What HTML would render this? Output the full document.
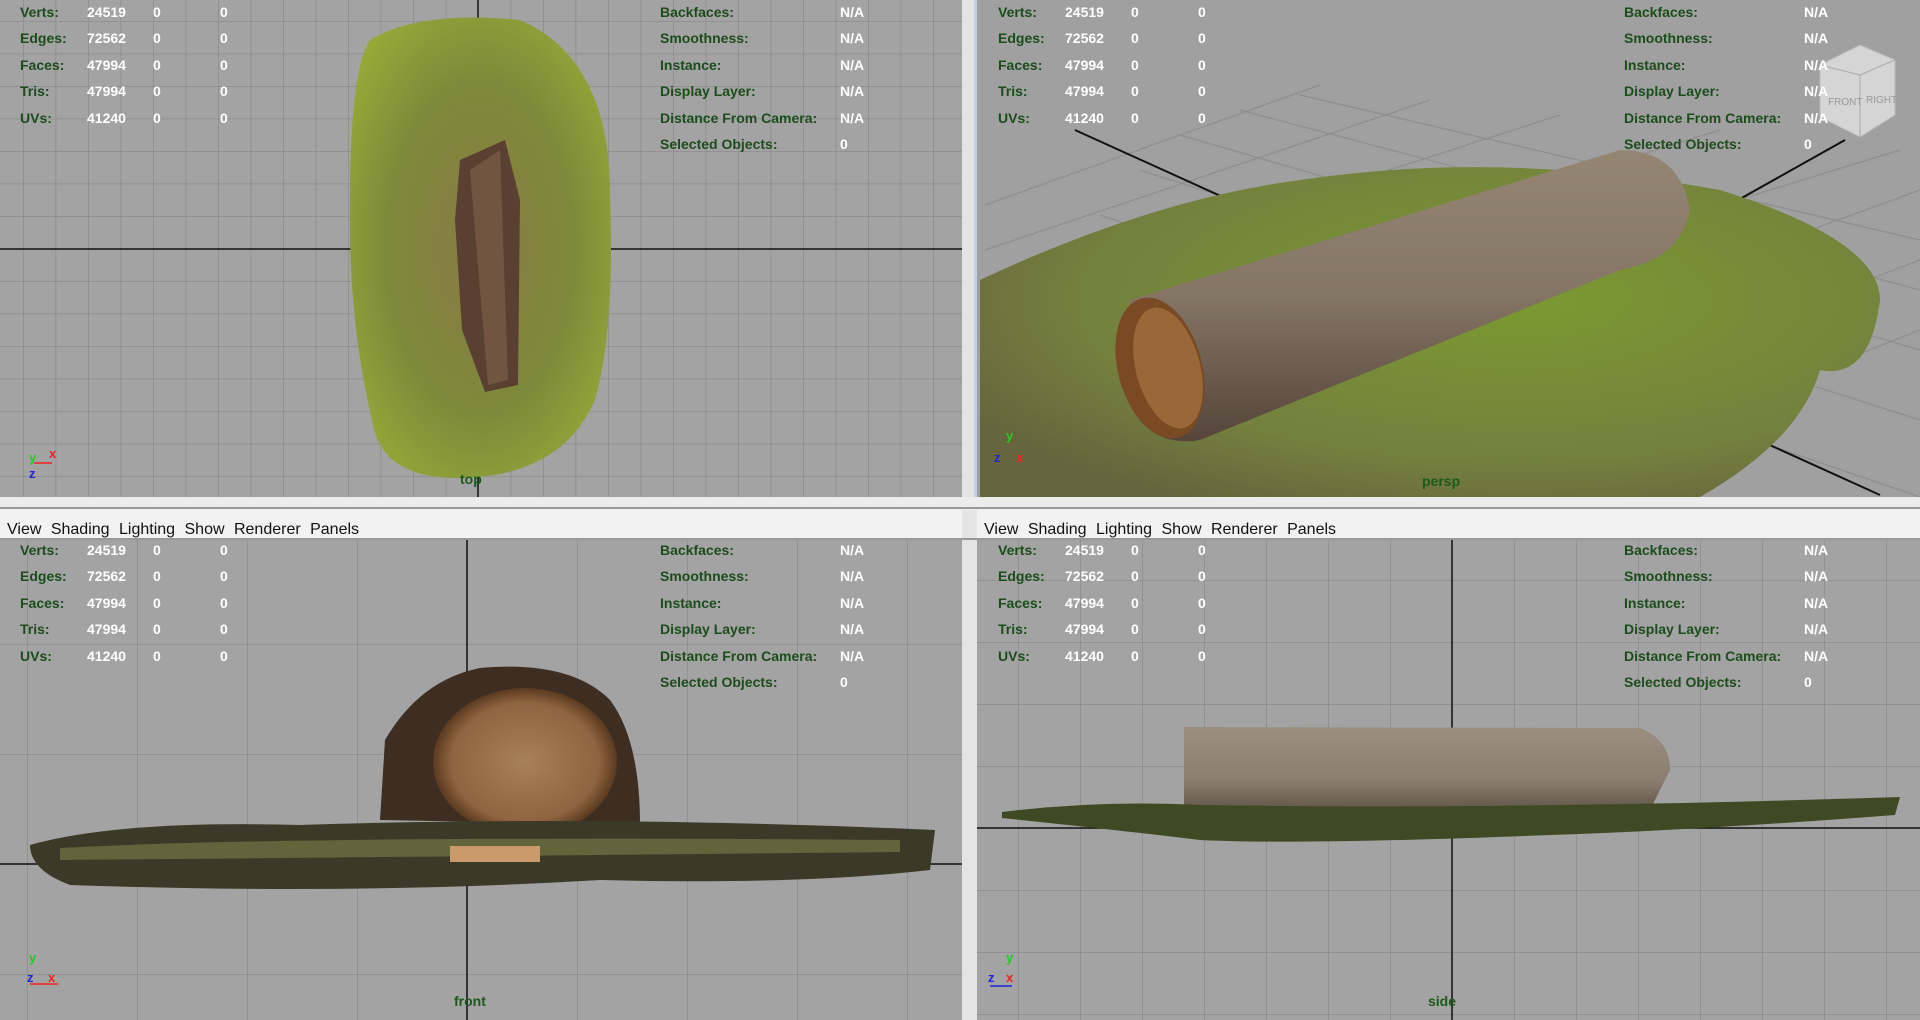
<!DOCTYPE html>
<html><head><meta charset="utf-8">
<style>
html,body{margin:0;padding:0;background:#e6e6e6;width:1920px;height:1020px;overflow:hidden}
svg{display:block}
.h{font-family:"Liberation Sans",sans-serif;font-weight:bold;font-size:14px}
.g{fill:#1b4d1b}.w{fill:#fff}
.m{font-family:"Liberation Sans",sans-serif;font-size:16px;fill:#111;word-spacing:5px}
</style></head><body>
<svg width="1920" height="1020" xmlns="http://www.w3.org/2000/svg">
<defs>
<pattern id="gTL" x="23" y="21" width="32.5" height="32.5" patternUnits="userSpaceOnUse"><path d="M0 0V32.5M0 0H32.5" stroke="#8c8c8c" stroke-width="1.5" fill="none"/></pattern>
<pattern id="gBL" x="27" y="534" width="110" height="110" patternUnits="userSpaceOnUse"><path d="M0 0V110M0 0H110" stroke="#8c8c8c" stroke-width="1.5" fill="none"/></pattern>
<pattern id="gBR" x="1018" y="580" width="62" height="62" patternUnits="userSpaceOnUse"><path d="M0 0V62M0 0H62" stroke="#8c8c8c" stroke-width="1.5" fill="none"/></pattern>
<radialGradient id="grass" cx="50%" cy="50%" r="60%"><stop offset="0" stop-color="#8a7a45"/><stop offset=".6" stop-color="#7d8a3a"/><stop offset="1" stop-color="#95a838"/></radialGradient>
<linearGradient id="bark" x1="0" y1="0" x2="0" y2="1"><stop offset="0" stop-color="#958674"/><stop offset=".5" stop-color="#847565"/><stop offset="1" stop-color="#55453a"/></linearGradient>
<linearGradient id="barkS" x1="0" y1="0" x2="0" y2="1"><stop offset="0" stop-color="#9a8f80"/><stop offset=".6" stop-color="#8a7e70"/><stop offset="1" stop-color="#5a5040"/></linearGradient>
<radialGradient id="cut"><stop offset="0" stop-color="#a8805a"/><stop offset=".8" stop-color="#8f6440"/><stop offset="1" stop-color="#5a3a20"/></radialGradient>
<radialGradient id="ground2" cx="60%" cy="40%" r="70%"><stop offset="0" stop-color="#7a9a30"/><stop offset=".7" stop-color="#74803e"/><stop offset="1" stop-color="#67653d"/></radialGradient>
</defs>

<!-- TL viewport -->
<rect x="0" y="0" width="962" height="497" fill="#a3a3a3"/>
<rect x="0" y="0" width="962" height="497" fill="url(#gTL)"/>
<line x1="478" y1="0" x2="478" y2="497" stroke="#111" stroke-width="1.5"/>
<line x1="0" y1="249" x2="962" y2="249" stroke="#111" stroke-width="1.5"/>
<path d="M370 40 Q420 10 520 20 Q612 60 610 200 Q615 330 595 400 Q560 480 450 478 Q380 475 372 420 Q348 320 350 200 Q350 70 370 40Z" fill="url(#grass)"/>
<path d="M460 160 L505 140 L520 200 L518 385 L485 392 L462 330 L455 220Z" fill="#5a4030"/>
<path d="M470 170 L500 150 L508 380 L488 385Z" fill="#7a5e48" opacity=".7"/>

<!-- TR viewport -->
<rect x="977" y="0" width="943" height="497" fill="#a0a0a0"/>
<g stroke="#8e8e8e" stroke-width="1.2" fill="none">
<path d="M985 205 L1320 85 M985 250 L1430 100 M985 300 L1560 115 M985 360 L1720 130 M990 430 L1900 150 M1100 490 L1920 190 M1300 497 L1920 260 M1500 497 L1920 330"/>
<path d="M1100 215 L1920 497 M1140 170 L1920 420 M1180 135 L1920 350 M1240 110 L1920 290 M1300 95 L1920 240 M1050 270 L1700 497 M1000 330 L1500 497"/>
</g>
<path d="M1075 130 L1880 495 M1845 140 L1560 300" stroke="#111" stroke-width="2"/>
<path d="M980 280 Q1150 200 1300 180 Q1500 150 1720 190 Q1880 240 1880 300 Q1870 380 1820 370 Q1800 440 1700 497 L980 497Z" fill="url(#ground2)"/>
<path d="M1130 300 L1620 150 Q1680 150 1690 210 Q1680 260 1620 270 L1200 440 Q1140 450 1120 380 Z" fill="url(#bark)"/>
<ellipse cx="1160" cy="368" rx="42" ry="72" transform="rotate(-15 1160 368)" fill="#7a4a25"/>
<ellipse cx="1168" cy="368" rx="32" ry="62" transform="rotate(-15 1168 368)" fill="#9a6838"/>
<g transform="translate(1820,45)"><path d="M0 20 L40 0 L75 15 L75 70 L40 92 L0 72Z" fill="#d5d5d5" stroke="#bbb"/><path d="M40 30 L40 92 M0 20 L40 30 L75 15" stroke="#aaa" fill="none"/><text x="8" y="60" font-size="10" fill="#999" font-family="Liberation Sans">FRONT</text><text x="46" y="58" font-size="10" fill="#999" font-family="Liberation Sans">RIGHT</text></g>
<text x="1422" y="486" class="h" fill="#1b5a1b">persp</text>

<!-- dividers -->
<rect x="962" y="0" width="15" height="1020" fill="#e4e4e4"/>
<rect x="974" y="0" width="3" height="497" fill="#bcd0e8"/>
<rect x="0" y="497" width="1920" height="13" fill="#ececec"/>
<rect x="0" y="507" width="1920" height="2" fill="#9a9a9a"/>
<rect x="0" y="510" width="962" height="30" fill="#f2f2f2"/>
<rect x="977" y="510" width="943" height="30" fill="#f2f2f2"/>
<rect x="0" y="538" width="1920" height="2" fill="#999"/>
<text x="7" y="534" class="m">View Shading Lighting Show Renderer Panels</text>
<text x="984" y="534" class="m">View Shading Lighting Show Renderer Panels</text>

<!-- BL viewport -->
<rect x="0" y="540" width="962" height="480" fill="#a3a3a3"/>
<rect x="0" y="540" width="962" height="480" fill="url(#gBL)"/>
<line x1="467" y1="540" x2="467" y2="1020" stroke="#111" stroke-width="1.5"/>
<line x1="0" y1="864" x2="962" y2="864" stroke="#111" stroke-width="1.5"/>
<path d="M380 820 L385 740 Q420 680 480 668 Q570 660 610 700 Q640 740 640 825Z" fill="#3e2e22"/>
<ellipse cx="525" cy="762" rx="92" ry="74" fill="url(#cut)"/>
<path d="M30 845 Q120 820 300 825 Q600 815 935 830 L930 870 Q800 885 600 880 Q350 895 70 885 Q30 870 30 845Z" fill="#3b3a28"/>
<path d="M60 848 Q300 835 900 840 L900 852 Q500 856 60 860Z" fill="#6a7040" opacity=".8"/>
<rect x="450" y="846" width="90" height="16" fill="#c99a6a"/>

<!-- BR viewport -->
<rect x="977" y="540" width="943" height="480" fill="#a3a3a3"/>
<rect x="977" y="540" width="943" height="480" fill="url(#gBR)"/>
<line x1="1452" y1="540" x2="1452" y2="1020" stroke="#111" stroke-width="1.5"/>
<line x1="977" y1="828" x2="1920" y2="828" stroke="#111" stroke-width="1.5"/>
<path d="M1184 727 L1640 728 Q1670 740 1670 770 L1650 810 L1184 815Z" fill="url(#barkS)"/>
<path d="M1002 812 Q1100 800 1200 805 Q1500 810 1900 797 L1895 815 Q1700 830 1550 835 Q1300 845 1200 840 Q1100 828 1002 818Z" fill="#3f4a25"/>
<text x="1428" y="1006" class="h" fill="#1b5a1b">side</text>

<text x="460" y="484" class="h" fill="#1b5a1b">top</text>
<text x="454" y="1006" class="h" fill="#1b5a1b">front</text>

<!-- axis gizmos -->
<g font-family="Liberation Sans" font-weight="bold" font-size="13">
<text x="29" y="462" fill="#2c2">y</text><text x="49" y="458" fill="#e22">x</text><line x1="34" y1="463" x2="52" y2="463" stroke="#e22" stroke-width="1.5"/><text x="29" y="478" fill="#22d">z</text>
<text x="1006" y="440" fill="#2c2">y</text><text x="994" y="462" fill="#22d">z</text><text x="1016" y="462" fill="#e22">x</text>
<text x="29" y="962" fill="#2c2">y</text><text x="27" y="982" fill="#22d">z</text><text x="48" y="982" fill="#e22">x</text><line x1="30" y1="984" x2="58" y2="984" stroke="#e22" stroke-width="1.5"/>
<text x="1006" y="962" fill="#2c2">y</text><text x="988" y="982" fill="#22d">z</text><text x="1006" y="982" fill="#e22">x</text><line x1="990" y1="986" x2="1012" y2="986" stroke="#22d" stroke-width="1.5"/>
</g>

<!-- HUDs -->
<g id="hudL" class="h">
<text x="20" y="17" class="g">Verts:</text><text x="87" y="17" class="w">24519</text><text x="153" y="17" class="w">0</text><text x="220" y="17" class="w">0</text>
<text x="20" y="43" class="g">Edges:</text><text x="87" y="43" class="w">72562</text><text x="153" y="43" class="w">0</text><text x="220" y="43" class="w">0</text>
<text x="20" y="70" class="g">Faces:</text><text x="87" y="70" class="w">47994</text><text x="153" y="70" class="w">0</text><text x="220" y="70" class="w">0</text>
<text x="20" y="96" class="g">Tris:</text><text x="87" y="96" class="w">47994</text><text x="153" y="96" class="w">0</text><text x="220" y="96" class="w">0</text>
<text x="20" y="123" class="g">UVs:</text><text x="87" y="123" class="w">41240</text><text x="153" y="123" class="w">0</text><text x="220" y="123" class="w">0</text>
</g>
<g id="hudR" class="h">
<text x="660" y="17" class="g">Backfaces:</text><text x="840" y="17" class="w">N/A</text>
<text x="660" y="43" class="g">Smoothness:</text><text x="840" y="43" class="w">N/A</text>
<text x="660" y="70" class="g">Instance:</text><text x="840" y="70" class="w">N/A</text>
<text x="660" y="96" class="g">Display Layer:</text><text x="840" y="96" class="w">N/A</text>
<text x="660" y="123" class="g">Distance From Camera:</text><text x="840" y="123" class="w">N/A</text>
<text x="660" y="149" class="g">Selected Objects:</text><text x="840" y="149" class="w">0</text>
</g>
<use href="#hudL" x="978" y="0"/>
<use href="#hudL" x="0" y="538"/>
<use href="#hudL" x="978" y="538"/>
<use href="#hudR" x="964" y="0"/>
<use href="#hudR" x="0" y="538"/>
<use href="#hudR" x="964" y="538"/>
</svg>
</body></html>
